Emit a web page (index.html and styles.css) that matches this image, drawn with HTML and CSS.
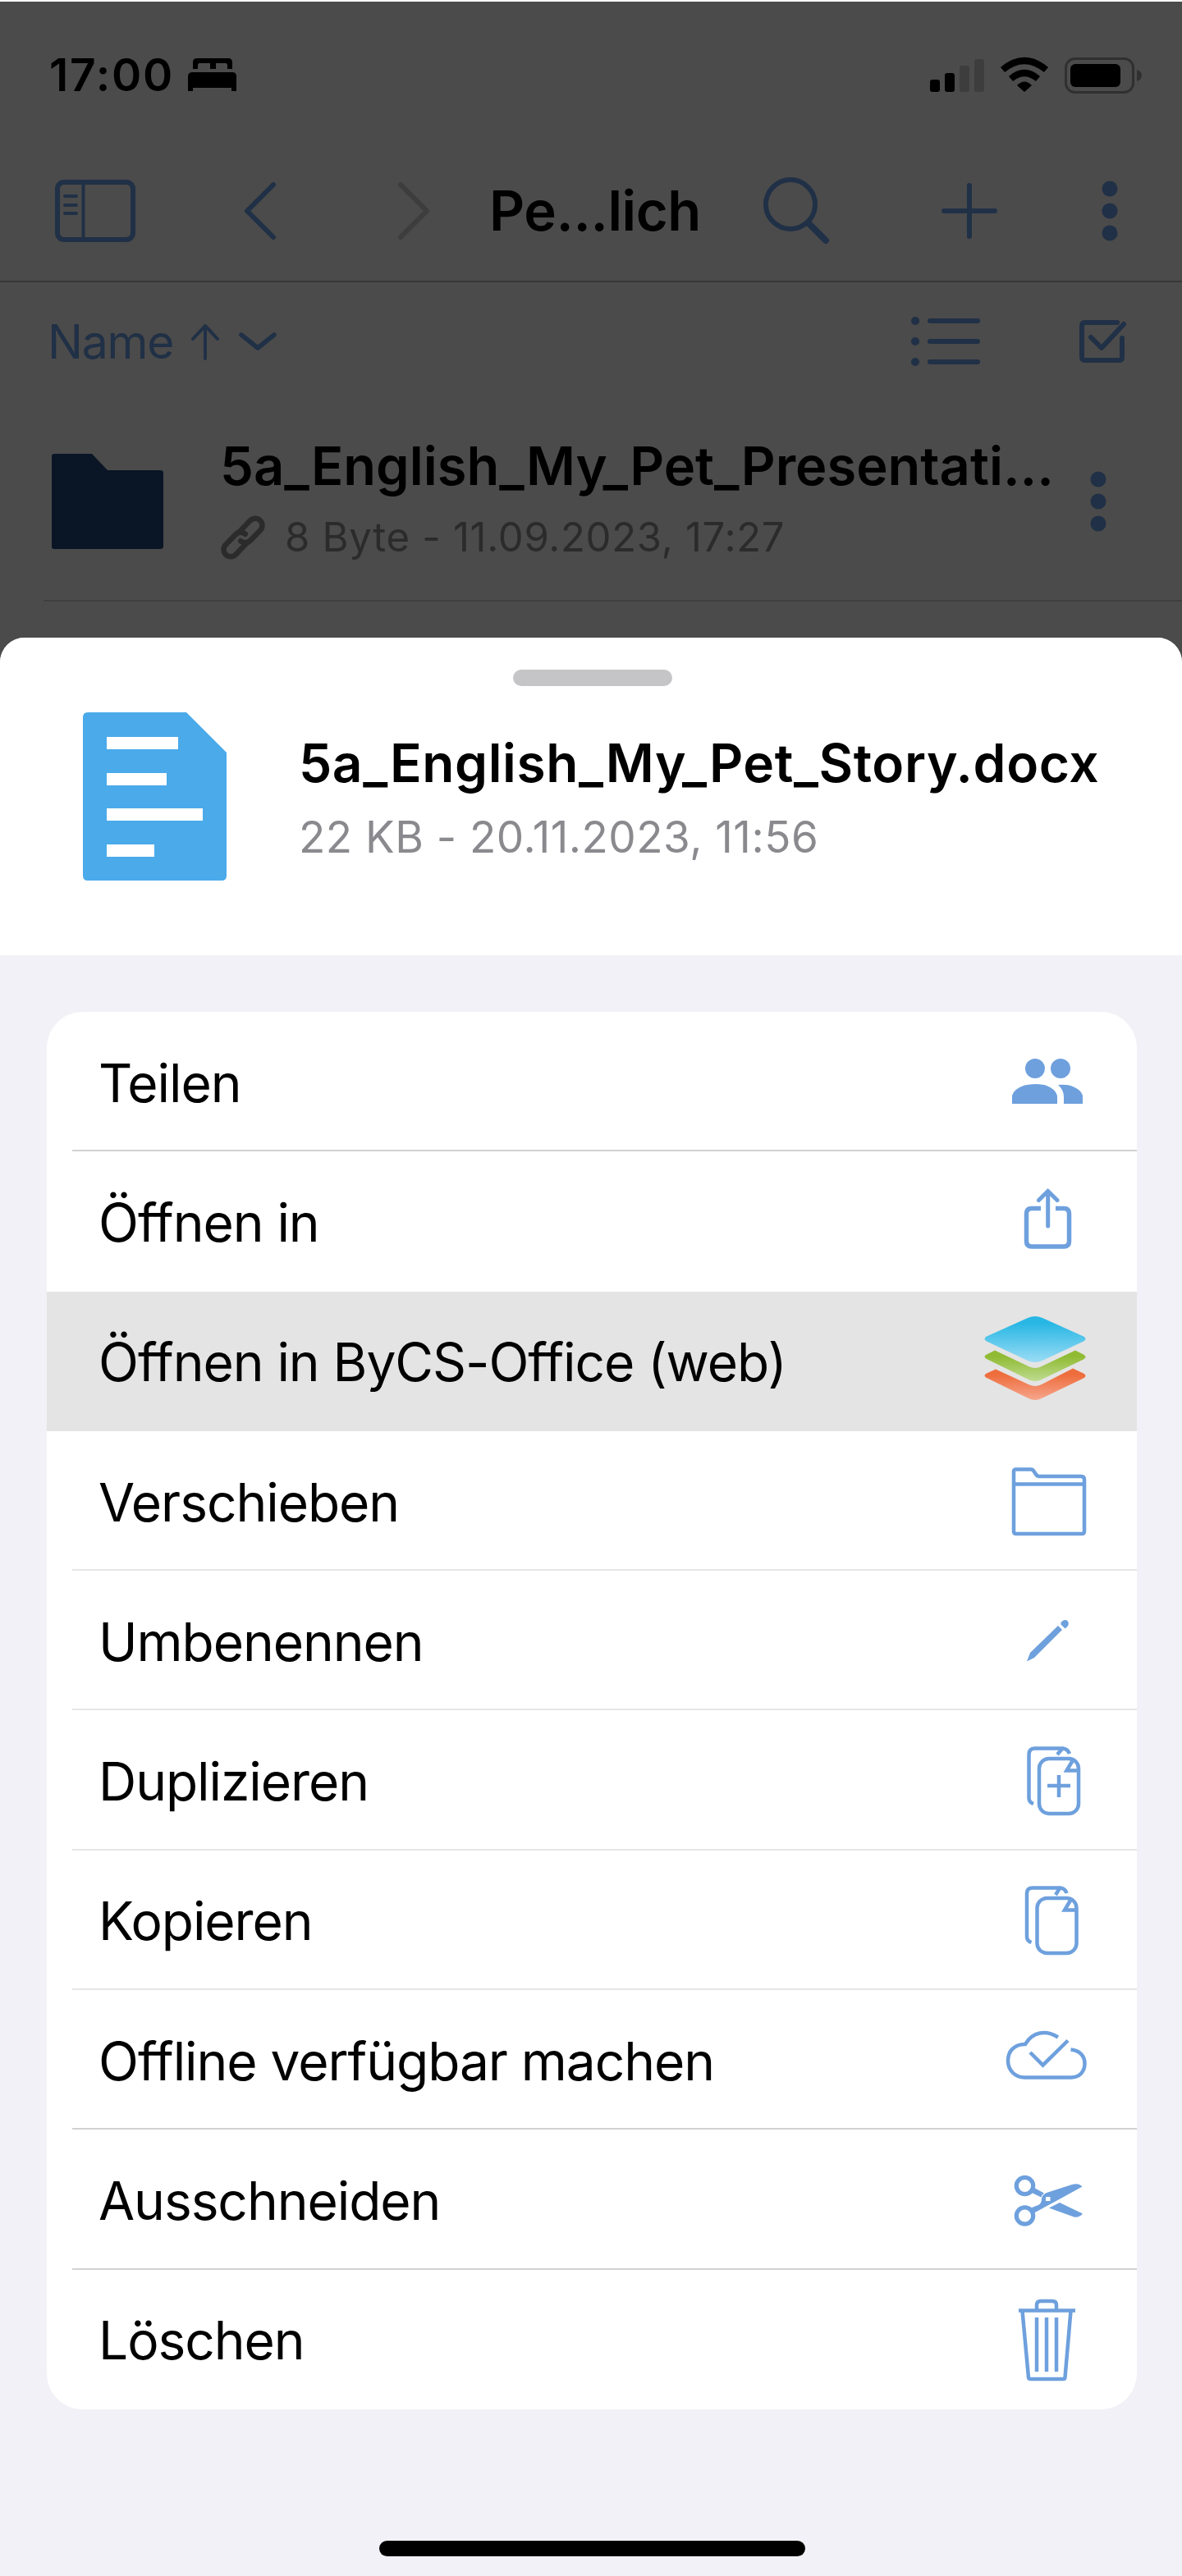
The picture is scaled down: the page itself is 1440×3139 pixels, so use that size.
FILE: index.html
```html
<!DOCTYPE html>
<html lang="de">

<head>
    <meta charset="UTF-8">
    <meta name="viewport" content="width=device-width, initial-scale=1.0">
    <title>Dateimenü</title>
    <link rel="stylesheet" href="styles.css">
</head>

<body>
    <div class="screen">
        <div class="status-bar">
            <span class="time">17:00</span>
            <svg class="bed" width="60" height="42" viewBox="0 0 60 42">
                <path d="M6 14V6q0-5 5-5h38q5 0 5 5v8h-6V9q0-2-2-2H34v7h-7V7H14q-2 0-2 2v5z"/>
                <path d="M0 41V23q0-5 6-5h48q5 0 5 5v18h-6v-4H6v4z"/>
            </svg>
            <svg class="status-icons" width="260" height="46" viewBox="0 0 260 46">
                <rect x="0" y="28" width="12" height="15" rx="3"/>
                <rect x="18" y="20" width="12" height="23" rx="3"/>
                <rect x="36" y="11" width="12" height="32" rx="3" fill="#3d3d3d"/>
                <rect x="54" y="3" width="12" height="40" rx="3" fill="#3d3d3d"/>
                <path d="M115 43l-9-8q9-9 18 0z"/>
                <path d="M98.500 27q16.500-14 33 0" fill="none" stroke="#000" stroke-width="8"/>
                <path d="M88.500 16q26.500-22 53 0" fill="none" stroke="#000" stroke-width="8"/>
                <rect x="165.500" y="2.500" width="82" height="41" rx="11" fill="none" stroke="#303030" stroke-width="3"/>
                <rect x="171" y="9" width="61" height="28" rx="6"/>
                <path d="M252 16q6 2 6 7t-6 7z" fill="#303030"/>
            </svg>
        </div>

        <div class="toolbar">
            <svg class="icon sidebar" width="98" height="76" viewBox="0 0 98 76">
                <rect x="3" y="3" width="92" height="70" rx="8"/>
                <path d="M34.500 3v70M12 20h14M12 31h14M12 41h14" stroke-width="4"/>
            </svg>
            <svg class="icon back" width="40" height="70" viewBox="0 0 40 70">
                <path d="M36 3L4 35l32 32"/>
            </svg>
            <svg class="icon forward" width="40" height="70" viewBox="0 0 40 70">
                <path d="M4 3l32 32L4 67"/>
            </svg>
            <h1 class="title">Pe...lich</h1>
            <svg class="icon search" width="82" height="82" viewBox="0 0 82 82">
                <circle cx="33" cy="33" r="30"/>
                <path d="M55 56l21 21" stroke-width="8"/>
            </svg>
            <svg class="icon plus" width="68" height="68" viewBox="0 0 68 68">
                <path d="M34 3v62M3 34h62"/>
            </svg>
            <svg class="dots" width="20" height="74" viewBox="0 0 20 74">
                <circle cx="10" cy="10" r="9.500"/>
                <circle cx="10" cy="37" r="9.500"/>
                <circle cx="10" cy="64" r="9.500"/>
            </svg>
        </div>

        <div class="sort-bar">
            <span class="sort-name">Name</span>
            <svg class="icon sort-arrow" width="36" height="46" viewBox="0 0 36 46">
                <path d="M18 44V4M3 20L18 4l15 16" stroke-width="4"/>
            </svg>
            <svg class="icon sort-chevron" width="46" height="24" viewBox="0 0 46 24">
                <path d="M3 4l20 16L43 4" stroke-width="5.500"/>
            </svg>
            <svg class="icon list" width="84" height="62" viewBox="0 0 84 62">
                <path d="M23 6h58M23 31h58M23 56h58"/>
                <path d="M5 6h.1M5 31h.1M5 56h.1" stroke-width="10"/>
            </svg>
            <svg class="icon check" width="58" height="56" viewBox="0 0 58 56">
                <path d="M46 5H7q-4 0-4 4v38q0 4 4 4h42q3 0 3-4V24"/>
                <path d="M14 23l13 13L54 7" stroke-width="6"/>
            </svg>
        </div>

        <div class="file-row">
            <svg class="folder" width="136" height="116" viewBox="0 0 136 116">
                <path d="M3 0h46l19 20h64q4 0 4 3v90q0 3-4 3H3q-3 0-3-3V3q0-3 3-3z"/>
            </svg>
            <div class="file-text">
                <div class="file-name">5a_English_My_Pet_Presentati...</div>
                <div class="file-meta">
                    <svg width="56" height="56" viewBox="0 0 56 56">
                        <g transform="rotate(-46 28 28)" fill="none" stroke="#2b2b2b" stroke-width="6.500" stroke-linecap="round">
                            <path d="M24 36H7a8.500 8.500 0 0 1 0-17h17q8 0 9 8"/>
                            <path d="M32 20h17a8.500 8.500 0 0 1 0 17H32q-8 0-9-8"/>
                        </g>
                    </svg>
                    <span>8 Byte - 11.09.2023, 17:27</span>
                </div>
            </div>
            <svg class="dots" width="20" height="74" viewBox="0 0 20 74">
                <circle cx="10" cy="10" r="9.500"/>
                <circle cx="10" cy="37" r="9.500"/>
                <circle cx="10" cy="64" r="9.500"/>
            </svg>
        </div>

        <div class="sheet">
            <div class="sheet-header">
                <div class="grabber"></div>
                <div class="document">
                    <svg width="175" height="205" viewBox="0 0 175 205">
                        <path d="M6 0h120l49 49v150q0 6-6 6H6q-6 0-6-6V6q0-6 6-6z" fill="#4aaaea"/>
                        <path d="M29 30h87v15H29zM29 74h73v15H29zM29 117h117v15H29zM29 161h58v15H29z" fill="#fff"/>
                    </svg>
                    <div class="document-text">
                        <div class="document-name">5a_English_My_Pet_Story.docx</div>
                        <div class="document-meta">22 KB - 20.11.2023, 11:56</div>
                    </div>
                </div>
            </div>

            <ul class="menu">
                <li>
                    <span>Teilen</span>
                    <svg class="solid" viewBox="0 0 200 170">
                        <circle cx="121" cy="69" r="12"/>
                        <circle cx="152" cy="69" r="12"/>
                        <path d="M93 112v-10q2-8 15-12.500 13-3 26 0 12 4.500 14 12.500v10z"/>
                        <path d="M156 112v-8q0-9-7-15 14-1.500 22 4 6 3 8 9v10z"/>
                    </svg>
                </li>
                <li>
                    <span>Öffnen in</span>
                    <svg class="line" viewBox="0 0 200 170">
                        <path d="M128 69.500h-11q-6.500 0-6.500 6.500v33.500q0 6.500 6.500 6.500h39q6.500 0 6.500-6.500V76q0-6.500-6.500-6.500h-10" stroke-width="5.500"/>
                        <path d="M136.700 91V49M125.500 59.500l11.200-11 11.300 11" stroke-width="5" stroke-linecap="round"/>
                    </svg>
                </li>
                <li class="selected">
                    <span>Öffnen in ByCS-Office (web)</span>
                    <svg viewBox="0 0 200 170">
                        <defs>
                            <linearGradient id="blue" x1="0" y1="0" x2="0" y2="1">
                                <stop offset=".15" stop-color="#28b7e4"/>
                                <stop offset="1" stop-color="#9bdcf5"/>
                            </linearGradient>
                            <linearGradient id="green" x1="0" y1="0" x2="0" y2="1">
                                <stop offset=".2" stop-color="#90bb33"/>
                                <stop offset="1" stop-color="#bfdb90"/>
                            </linearGradient>
                            <linearGradient id="red" x1="0" y1="0" x2="0" y2="1">
                                <stop offset=".2" stop-color="#ee6d3d"/>
                                <stop offset="1" stop-color="#f6a68d"/>
                            </linearGradient>
                        </defs>
                        <path d="M62 99.500l11-5L113 113q8 4 16 0l38-19.500 13 6q5 3 0 6L129 130q-8 4-16 0L62 105q-5-3 0-5.500z" fill="url(#red)"/>
                        <path d="M62 76.500l10-5L113 91q8 4 16 0l41-19.500 10 5q5 3 0 6L129 107q-8 4-16 0L62 82q-5-3 0-5.500z" fill="url(#green)"/>
                        <path d="M62 54.500L112 32q9-4 18 0l50 22.500q5 3 0 6L130 84q-9 4-18 0L62 60.500q-5-3 0-6z" fill="url(#blue)"/>
                    </svg>
                </li>
                <li>
                    <span>Verschieben</span>
                    <svg class="line" viewBox="0 0 200 170">
                        <path d="M95 49q0-2.500 3-2.500h18q2.500 0 4 3l2 3q1.500 2.500 4 2.500h51q4 0 4 4v63q0 3-3 3H98q-3 0-3-3zM95 64.500h86"/>
                    </svg>
                </li>
                <li>
                    <span>Umbenennen</span>
                    <svg class="solid" viewBox="0 0 200 170">
                        <path d="M111 110.500l4-10.500 34-33 5 5-34 34z"/>
                        <path d="M152.500 63q4-5 8-2 3 4-1 8l-2 1.500-5-5z"/>
                    </svg>
                </li>
                <li>
                    <span>Duplizieren</span>
                    <svg class="line" viewBox="0 0 200 170">
                        <path d="M119 113q-5.500-2-5.500-7V53q0-7.500 7.500-7.500h34q6 1 8 6.500M154 46l-6 7"/>
                        <rect x="126" y="58" width="48" height="67" rx="12"/>
                        <path d="M167 60l-7.500 12.500H174M150 78v27M136 91h28"/>
                    </svg>
                </li>
                <li>
                    <span>Kopieren</span>
                    <svg class="line" viewBox="0 0 200 170">
                        <path d="M116.500 112q-5.500-2-5.500-7V52q0-6.500 7-6.500h34q6 1 7.500 6.500M151 46l-5 8"/>
                        <rect x="123.500" y="58" width="48" height="67" rx="12"/>
                        <path d="M164.500 60l-7.500 12.500h14.500"/>
                    </svg>
                </li>
                <li>
                    <span>Offline verfügbar machen</span>
                    <svg class="line" viewBox="0 0 200 170">
                        <path d="M149 57.500C134 48 118 51 109 66 95 66 88 75 88 86c0 12 9 20.500 20 20.500h57c10 0 16.500-7 16.500-17s-7-16-17-17"/>
                        <path d="M115 76l15.500 15.500L161 61.500"/>
                    </svg>
                </li>
                <li>
                    <span>Ausschneiden</span>
                    <svg class="line" viewBox="0 0 200 170">
                        <circle cx="108.500" cy="67.500" r="10.200" stroke-width="5.200"/>
                        <circle cx="108.500" cy="104" r="10.200" stroke-width="5.200"/>
                        <path class="fill" d="M120 70l12 6.500q-3 2-3.500 5L117 76z"/>
                        <path class="fill" fill-rule="evenodd" d="M117 94l8-3q4-2 4-8 1-5 6-7l31-10q8-2.500 12.500 2.500l-29 16L119 101zM134 81v5h5.500v-5z"/>
                        <path class="fill" d="M138 94.500l13-6.500 28 13.500q-4 5-10.500 4z"/>
                    </svg>
                </li>
                <li>
                    <span>Löschen</span>
                    <svg class="line" viewBox="0 0 200 170">
                        <path d="M101 49.500h69M123 49v-6q0-5 5-5h14q5 0 5 5v6M105.500 50l7.500 81q0 2 3 2h39q2.500 0 2.500-2l7-81M123 58v66M135 58v66M147 58v66"/>
                    </svg>
                </li>
            </ul>
            <div class="home-indicator"></div>
        </div>
    </div>
</body>

</html>
```
FILE: styles.css
```css
* {
    box-sizing: border-box;
}

body {
    margin: 0;
    background: #fff;
    font-family: Inter, "Liberation Sans", sans-serif;
    color: #000;
}

svg {
    display: block;
    flex: none;
}

span {
    white-space: nowrap;
}

.screen {
    width: 1440px;
    height: 3139px;
    border-top: 2px solid #fff;
    background: #4b4b4b;
    overflow: hidden;
}

/* status bar */
.status-bar {
    display: flex;
    height: 178px;
    padding: 67px 47px 0 60px;
}

.time {
    width: 169px;
    line-height: 44px;
    font-size: 55px;
    font-weight: 600;
    letter-spacing: 1.8px;
}

.status-icons {
    margin-left: auto;
}

.bed {
    margin-top: 1px;
}

/* toolbar */
.toolbar {
    display: flex;
    align-items: center;
    height: 164px;
    padding: 0 78px 8px 67px;
    border-bottom: 2px solid #373737;
}

.icon {
    fill: none;
    stroke: #203046;
    stroke-width: 6;
    stroke-linecap: round;
    stroke-linejoin: round;
}

.dots {
    fill: #203046;
}

.back {
    margin-left: 132px;
}

.forward {
    margin-left: 147px;
    stroke: #3d3d3d;
}

.title {
    width: 330px;
    margin: 0;
    padding-left: 72px;
    font-size: 67px;
    line-height: 80px;
    font-weight: 600;
    letter-spacing: -0.4px;
}

.search {
    margin-left: 76px;
}

.plus {
    margin-left: 135px;
}

.toolbar .dots {
    margin-left: auto;
}

/* sort bar */
.sort-bar {
    display: flex;
    align-items: center;
    height: 144px;
    padding: 0 67px 0 58px;
    color: #203046;
}

.sort-name {
    width: 174px;
    padding-top: 2px;
    font-size: 57px;
    line-height: 64px;
    letter-spacing: -1.2px;
}

.sort-chevron {
    margin-left: 23px;
}

.list {
    margin-left: auto;
}

.check {
    margin-left: 121px;
}

/* file list */
.file-row {
    display: flex;
    align-items: flex-start;
    height: 245px;
    margin-left: 53px;
    padding: 46px 92px 0 10px;
    border-bottom: 2px solid #3f3f3f;
}

.folder {
    margin-top: 19px;
    fill: #0a1626;
}

.file-text {
    width: 1090px;
    margin-top: -4px;
    padding-left: 69px;
}

.file-name {
    font-size: 65px;
    line-height: 76px;
    font-weight: 600;
    white-space: nowrap;
}

.file-meta {
    display: flex;
    align-items: center;
    gap: 23px;
    margin-top: 19px;
    font-size: 49px;
    line-height: 60px;
    letter-spacing: 0.7px;
    color: #2b2b2b;
}

.file-row .dots {
    margin: 40px 0 0 auto;
}

/* bottom sheet */
.sheet {
    height: 2362px;
    margin-top: 44px;
    background: #f2f1f7;
    border-radius: 30px 30px 0 0;
    overflow: hidden;
}

.sheet-header {
    height: 387px;
    padding-top: 39px;
    background: #fff;
}

.grabber {
    width: 194px;
    height: 20px;
    margin: 0 0 0 625px;
    border-radius: 10px;
    background: #c5c5c7;
}

.document {
    display: flex;
    padding: 32px 0 0 101px;
}

.document-text {
    padding: 24px 0 0 88px;
}

.document-name {
    font-size: 64px;
    line-height: 76px;
    font-weight: 600;
    letter-spacing: 0.6px;
}

.document-meta {
    margin-top: 22px;
    font-size: 53px;
    line-height: 60px;
    letter-spacing: 0.5px;
    color: #8a8a8e;
}

.menu {
    list-style: none;
    width: 1328px;
    margin: 69px 0 0 57px;
    padding: 0;
    background: #fff;
    border-radius: 44px;
    overflow: hidden;
}

.menu li {
    display: flex;
    align-items: center;
    justify-content: space-between;
    height: 170.3px;
    padding: 0 45px 0 63px;
    background: linear-gradient(#d2d2d2, #d2d2d2) 31px 100% / 100% 2px no-repeat;
    font-size: 64px;
    line-height: 80px;
    letter-spacing: -1.05px;
}

.menu li:nth-child(4),
.menu li:nth-child(5),
.menu li:nth-child(6),
.menu li:nth-child(7) {
    background-image: linear-gradient(#e6e6e6, #e6e6e6);
}

.menu li.selected {
    background: #e4e4e4;
}

.menu li:nth-child(2),
.menu li:last-child {
    background: none;
}

.menu span {
    padding-top: 3px;
}

.menu svg {
    width: 200px;
    height: 170px;
}

.solid,
.line .fill {
    fill: #6ea0dd;
    stroke: none;
}

.line {
    fill: none;
    stroke: #6ea0dd;
    stroke-width: 4.5;
}

.home-indicator {
    width: 519px;
    height: 19px;
    margin: 160px 0 0 462px;
    border-radius: 10px;
    background: #000;
}
```
